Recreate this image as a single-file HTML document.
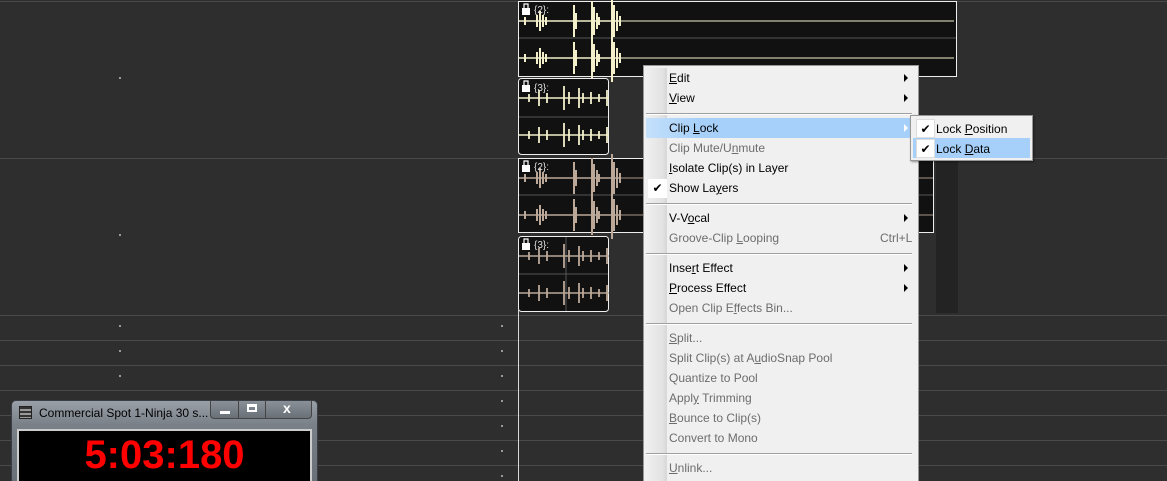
<!DOCTYPE html>
<html style="width:1167px;height:481px;overflow:hidden"><head><meta charset="utf-8"><style>
*{margin:0;padding:0;box-sizing:border-box}
body{width:1167px;height:481px;background:#2e2e2e;position:relative;overflow:hidden;font-family:"Liberation Sans",sans-serif}
.h{position:absolute;left:0;width:1167px;height:1px;background:#4a4a4a}
.dot{position:absolute;width:2px;height:2px;background:#9a9a9a}
.menu{position:absolute;left:643px;top:65px;width:276px;height:416px;background:#f0f0f0;border:1px solid #979797;border-bottom:none}
.gut{position:absolute;left:2px;top:2px;width:21px;bottom:0;background:linear-gradient(90deg,#f0f0f0,#e2e2e2 80%,#d6d6d6)}
.it{position:absolute;left:25px;font-size:12px;color:#000;height:20px;line-height:22px;white-space:nowrap}
.dis{color:#6d6d6d}
.ar{position:absolute;right:10px;width:0;height:0;border-left:4px solid #000;border-top:4px solid transparent;border-bottom:4px solid transparent}
.sep{position:absolute;left:2px;right:6px;height:2px;border-top:1px solid #a0a0a0;border-bottom:1px solid #fff}
.hl{position:absolute;background:linear-gradient(90deg,#c4e0fb,#a6d0fa 20%,#a6d0fa);}
.ck{position:absolute;width:19px;height:19px;background:#fff;border:1px solid #ddd;font-size:12px;text-align:center;line-height:18px;color:#000}
u{text-decoration:underline}
</style></head><body>
<div class="h" style="top:1px"></div>
<div class="h" style="top:158px"></div>
<div class="h" style="top:315px"></div>
<div class="h" style="top:340px"></div>
<div class="h" style="top:365px"></div>
<div class="h" style="top:390px"></div>
<div class="h" style="top:415px"></div>
<div class="h" style="top:440px"></div>
<div class="h" style="top:465px"></div>
<div style="position:absolute;left:518px;top:310px;width:1px;height:171px;background:#d8d8d8"></div>
<div style="position:absolute;left:936px;top:158px;width:22px;height:155px;background:#232323"></div>
<div class="dot" style="left:119px;top:77px"></div>
<div class="dot" style="left:119px;top:234px"></div>
<div class="dot" style="left:119px;top:325px"></div>
<div class="dot" style="left:119px;top:350px"></div>
<div class="dot" style="left:119px;top:375px"></div>
<div class="dot" style="left:501px;top:325px"></div>
<div class="dot" style="left:501px;top:350px"></div>
<div class="dot" style="left:501px;top:375px"></div>
<div class="dot" style="left:501px;top:400px"></div>
<div class="dot" style="left:501px;top:425px"></div>
<div class="dot" style="left:501px;top:450px"></div>
<div class="dot" style="left:501px;top:475px"></div>

<svg style="position:absolute;left:0;top:0" width="1167" height="481">
<defs>
<g id="wv">
<path d="M0 0H100" stroke-width="1.5"/>
<path d="M6-4V4M18-6V6M21-10V10M24-6V6M27-4V4M55-16V16M57-8V8M73-20V20M75-14V14M78-8V8M80-4V4M93-24V24M95-16V16M98-10V10M101-5V5" stroke-width="2"/>
</g>
<g id="wv2">
<path d="M0 0H90" stroke-width="1.5"/>
<path d="M10-4V4M20-8V8M28-5V5M45-12V12M50-6V6M60-10V10M64-5V5M72-6V6M80-4V4M88-8V8" stroke-width="1.8"/>
</g>
</defs>
<rect x="518.5" y="1.5" width="438" height="75" fill="#111" stroke="#eee"/>
<line x1="519" y1="38" x2="956" y2="38" stroke="#555"/>
<g stroke="#f2efca"><use href="#wv" x="519" y="21"/><use href="#wv" x="519" y="58"/>
<line x1="620" y1="21" x2="954" y2="21" stroke-width="1"/><line x1="620" y1="58" x2="954" y2="58" stroke-width="1"/></g>
<rect x="518.5" y="78.5" width="90" height="76" rx="3" fill="#111" stroke="#eee"/>
<line x1="519" y1="117" x2="608" y2="117" stroke="#555"/>
<g stroke="#f2efca"><use href="#wv2" x="519" y="98"/><use href="#wv2" x="519" y="135"/></g>
<rect x="518.5" y="158.5" width="415" height="74" fill="#111" stroke="#eee"/>
<line x1="519" y1="195" x2="933" y2="195" stroke="#555"/>
<line x1="519" y1="178" x2="933" y2="178" stroke="#a89888"/>
<line x1="519" y1="215" x2="933" y2="215" stroke="#a89888"/>
<g stroke="#bba898"><use href="#wv" x="519" y="178"/><use href="#wv" x="519" y="215"/></g>
<rect x="518.5" y="236.5" width="90" height="75" rx="3" fill="#111" stroke="#eee"/>
<line x1="519" y1="274" x2="608" y2="274" stroke="#555"/>
<line x1="566" y1="237" x2="566" y2="311" stroke="#555"/>
<g stroke="#bba898"><use href="#wv2" x="519" y="256"/><use href="#wv2" x="519" y="293"/></g>
<g fill="#fff" font-family="Liberation Sans" font-size="10">
<rect x="522" y="8" width="8" height="7"/><rect x="522" y="85" width="8" height="7"/><rect x="522" y="165" width="8" height="7"/><rect x="522" y="243" width="8" height="7"/>
<text x="534" y="13" fill="#ddd">{2}:</text><text x="534" y="91" fill="#ddd">{3}:</text><text x="534" y="170" fill="#ddd">{2}:</text><text x="534" y="248" fill="#ddd">{3}:</text>
</g>
<g fill="none" stroke="#fff" stroke-width="1.2"><path d="M524 8V4h4v4"/><path d="M524 85V81h4v4"/><path d="M524 165V161h4v4"/><path d="M524 243V239h4v4"/></g>
</svg>

<div class="menu">
<div class="gut"></div>
<div class="hl" style="left:2px;top:52px;width:268px;height:20px"></div>
<div class="it" style="top:1px"><u>E</u>dit</div><div class="ar" style="top:8px"></div>
<div class="it" style="top:21px"><u>V</u>iew</div><div class="ar" style="top:28px"></div>
<div class="sep" style="top:47px"></div>
<div class="it" style="top:51px">Clip <u>L</u>ock</div><div class="ar" style="top:58px;border-left-color:#fff"></div>
<div class="it dis" style="top:71px">Clip Mute/U<u>n</u>mute</div>
<div class="it" style="top:91px"><u>I</u>solate Clip(s) in Layer</div>
<div class="ck" style="left:4px;top:113px;border:none">✔</div>
<div class="it" style="top:111px">Show La<u>y</u>ers</div>
<div class="sep" style="top:137px"></div>
<div class="it" style="top:141px">V-V<u>o</u>cal</div><div class="ar" style="top:148px"></div>
<div class="it dis" style="top:161px">Groove-Clip <u>L</u>ooping</div><div class="it dis" style="top:161px;left:236px">Ctrl+L</div>
<div class="sep" style="top:187px"></div>
<div class="it" style="top:191px">Inse<u>r</u>t Effect</div><div class="ar" style="top:198px"></div>
<div class="it" style="top:211px"><u>P</u>rocess Effect</div><div class="ar" style="top:218px"></div>
<div class="it dis" style="top:231px">Open Clip E<u>f</u>fects Bin...</div>
<div class="sep" style="top:257px"></div>
<div class="it dis" style="top:261px"><u>S</u>plit...</div>
<div class="it dis" style="top:281px">Split Clip(s) at A<u>u</u>dioSnap Pool</div>
<div class="it dis" style="top:301px">Quantize to Pool</div>
<div class="it dis" style="top:321px">Appl<u>y</u> Trimming</div>
<div class="it dis" style="top:341px"><u>B</u>ounce to Clip(s)</div>
<div class="it dis" style="top:361px">Convert to Mono</div>
<div class="sep" style="top:387px"></div>
<div class="it dis" style="top:391px"><u>U</u>nlink...</div>
</div>

<div style="position:absolute;left:910px;top:115px;width:123px;height:46px;background:#f0f0f0;border:1px solid #979797;box-shadow:1px 1px 2px rgba(0,0,0,.4)">
<div class="hl" style="left:2px;top:22px;width:117px;height:20px;background:#a6d0fa"></div>
<div class="ck" style="left:5px;top:3px">✔</div>
<div class="ck" style="left:5px;top:23px">✔</div>
<div class="it" style="top:2px;left:25px">Lock <u>P</u>osition</div>
<div class="it" style="top:22px;left:25px">Lock <u>D</u>ata</div>
</div>

<div style="position:absolute;left:11px;top:400px;width:307px;height:81px;border-radius:5px 5px 0 0;background:linear-gradient(180deg,#9aa0a8,#7a8088 30%,#6a7078);border:1px solid #3a3e44;border-bottom:none">
<div style="position:absolute;left:7px;top:5px;width:13px;height:13px;border:1px solid #222;background:repeating-linear-gradient(180deg,#333 0 2px,#999 2px 4px)"></div>
<div style="position:absolute;left:27px;top:5px;font-size:12px;color:#000">Commercial Spot 1-Ninja 30 s...</div>
<div style="position:absolute;left:198px;top:0;width:102px;height:18px;border:1px solid #444;border-top:none;border-radius:0 0 4px 4px;background:linear-gradient(#8a9098,#6a7078)">
<div style="position:absolute;left:27px;top:0;width:1px;height:17px;background:#444"></div>
<div style="position:absolute;left:54px;top:0;width:1px;height:17px;background:#444"></div>
<div style="position:absolute;left:9px;top:10px;width:10px;height:3px;background:#fff"></div>
<div style="position:absolute;left:36px;top:3px;width:10px;height:8px;border:2px solid #fff;border-top-width:3px"></div>
<div style="position:absolute;left:72px;top:-1px;font-size:14px;font-weight:bold;color:#fff">x</div>
</div>
<div style="position:absolute;left:5px;top:28px;width:295px;height:60px;background:#000;border:2px solid #ccc;border-bottom:none">
<div style="position:absolute;left:0;width:291px;top:2px;text-align:center;font-size:40px;font-weight:bold;color:#ff0000;line-height:44px">5:03:180</div>
</div>
</div>
</body></html>
